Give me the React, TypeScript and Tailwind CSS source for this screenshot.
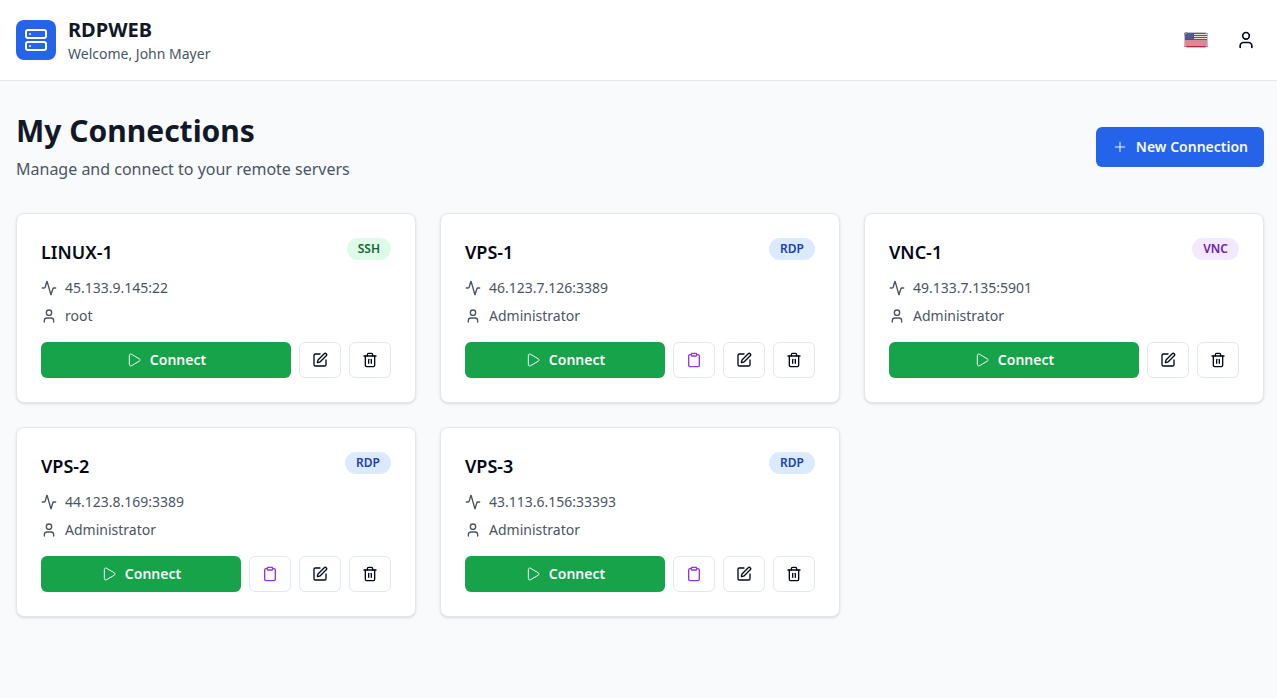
import { Activity, Clipboard, Play, Plus, Server, SquarePen, Trash2, User } from 'lucide-react'

type Protocol = 'SSH' | 'RDP' | 'VNC'

interface Connection {
  id: number
  name: string
  protocol: Protocol
  address: string
  username: string
}

const connections: Connection[] = [
  { id: 1, name: 'LINUX-1', protocol: 'SSH', address: '45.133.9.145:22', username: 'root' },
  { id: 2, name: 'VPS-1', protocol: 'RDP', address: '46.123.7.126:3389', username: 'Administrator' },
  { id: 3, name: 'VNC-1', protocol: 'VNC', address: '49.133.7.135:5901', username: 'Administrator' },
  { id: 4, name: 'VPS-2', protocol: 'RDP', address: '44.123.8.169:3389', username: 'Administrator' },
  { id: 5, name: 'VPS-3', protocol: 'RDP', address: '43.113.6.156:33393', username: 'Administrator' },
]

const badgeStyles: Record<Protocol, string> = {
  SSH: 'bg-[#dcfce7] text-[#166534]',
  RDP: 'bg-[#dbeafe] text-[#1e40af]',
  VNC: 'bg-[#f3e8ff] text-[#6b21a8]',
}

const iconButton =
  'flex h-9 w-[42px] shrink-0 items-center justify-center rounded-md border border-[#e2e8f0] bg-white text-[#020817] hover:bg-gray-100'

const UsFlag = () => (
  <svg className="h-4 w-6" viewBox="0 0 24 16" aria-hidden="true">
    <defs>
      <clipPath id="flag-shape">
        <rect width="24" height="16" rx="3" />
      </clipPath>
    </defs>
    <g clipPath="url(#flag-shape)">
      <rect width="24" height="16" fill="#ecd9de" />
      {[1, 3, 5, 7].map((y) => (
        <rect key={y} y={y} width="24" height="1" fill="#b8324a" />
      ))}
      <rect y="8" width="24" height="6" fill="#d98a94" />
      <rect y="14" width="24" height="1" fill="#b8203c" />
      <rect width="10" height="8" fill="#4c4f82" />
      {[2, 4, 6].map((y) =>
        [2, 4, 6, 8].map((x) => <circle key={`${x}-${y}`} cx={x} cy={y} r="0.4" fill="#a5a7c6" />)
      )}
      <rect x="0.5" y="0.5" width="23" height="15" rx="3" fill="none" stroke="#c3c6d0" />
    </g>
  </svg>
)

const ConnectionCard = ({ connection }: { connection: Connection }) => {
  return (
    <div className="rounded-lg border border-[#e2e8f0] bg-white p-6 shadow-sm">
      <div className="flex items-start justify-between">
        <h3 className="text-lg font-semibold text-[#020817]">{connection.name}</h3>
        <span
          className={`rounded-full border border-transparent px-2.5 py-0.5 text-xs font-semibold ${badgeStyles[connection.protocol]}`}
        >
          {connection.protocol}
        </span>
      </div>

      <div className="mt-3 space-y-2 text-sm text-[#4b5563]">
        <div className="flex items-center gap-2">
          <Activity className="h-4 w-4" />
          <span>{connection.address}</span>
        </div>
        <div className="flex items-center gap-2">
          <User className="h-4 w-4" />
          <span>{connection.username}</span>
        </div>
      </div>

      <div className="mt-4 flex gap-2">
        <button
          type="button"
          className="flex h-9 flex-1 items-center justify-center gap-2 rounded-md bg-[#16a34a] text-sm font-semibold text-[#f8fafc] hover:bg-green-700"
        >
          <Play className="h-4 w-4" strokeWidth={1.5} />
          Connect
        </button>
        {connection.protocol === 'RDP' && (
          <button type="button" aria-label="Clipboard" className={iconButton}>
            <Clipboard className="h-4 w-4 text-[#9333ea]" />
          </button>
        )}
        <button type="button" aria-label="Edit" className={iconButton}>
          <SquarePen className="h-4 w-4" />
        </button>
        <button type="button" aria-label="Delete" className={iconButton}>
          <Trash2 className="h-4 w-4" />
        </button>
      </div>
    </div>
  )
}

const App = () => {
  return (
    <div className="min-h-screen bg-[#f9fafb] font-['Segoe_UI','Noto_Sans',sans-serif]">
      <header className="border-b border-[#e5e7eb] bg-white">
        <div className="flex items-center justify-between py-4 pr-[13px] pl-4">
          <div className="flex items-center gap-3">
            <div className="flex h-10 w-10 items-center justify-center rounded-lg bg-[#2563eb]">
              <Server className="h-6 w-6 text-white" />
            </div>
            <div>
              <h1 className="text-xl font-bold text-[#111827]">RDPWEB</h1>
              <p className="text-sm text-[#4b5563]">Welcome, John Mayer</p>
            </div>
          </div>
          <div className="flex items-center gap-4">
            <button type="button" aria-label="Language" className="flex h-9 w-8 items-center justify-center">
              <UsFlag />
            </button>
            <button type="button" aria-label="Account" className="flex h-9 w-9 items-center justify-center text-[#020817]">
              <User className="h-5 w-5" />
            </button>
          </div>
        </div>
      </header>

      <main className="py-8 pr-[13px] pl-4">
        <div className="mb-8 flex items-center justify-between">
          <div>
            <h2 className="text-3xl font-bold text-[#111827]">My Connections</h2>
            <p className="mt-2 text-[#4b5563]">Manage and connect to your remote servers</p>
          </div>
          <button
            type="button"
            className="flex h-10 items-center gap-2 rounded-md bg-[#2563eb] px-4 text-sm font-semibold text-[#f8fafc] hover:bg-blue-700"
          >
            <Plus className="h-4 w-4" strokeWidth={1.5} />
            New Connection
          </button>
        </div>

        <div className="grid grid-cols-1 gap-6 md:grid-cols-2 lg:grid-cols-3">
          {connections.map((connection) => (
            <ConnectionCard key={connection.id} connection={connection} />
          ))}
        </div>
      </main>
    </div>
  )
}

export default App
